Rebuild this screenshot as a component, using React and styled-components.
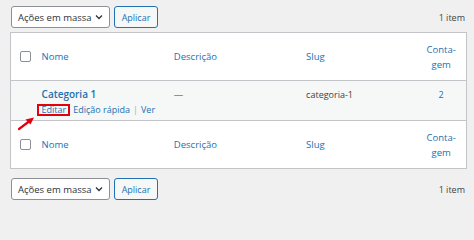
import React from 'react';
import styled, { createGlobalStyle } from 'styled-components';

const GlobalStyle = createGlobalStyle`
  html, body {
    margin: 0;
    padding: 0;
    background: #f0f0f1;
  }
  body {
    font-family: "Open Sans", "Noto Sans", sans-serif;
    font-size: 10px;
    color: #3c434a;
  }
`;

const Page = styled.div`
  padding: 6px 7px 0 10px;
  width: 457px;
  white-space: nowrap;
`;

const Nav = styled.div`
  display: flex;
  align-items: center;
  height: 22px;
  margin: ${({ $bottom }) => ($bottom ? '9px 0 0' : '0 0 4px')};
`;

const Select = styled.div`
  display: flex;
  align-items: center;
  justify-content: space-between;
  box-sizing: border-box;
  width: 99px;
  height: 22px;
  padding: 0 6px 0 6px;
  background: #fff;
  border: 1px solid #8c8f94;
  border-radius: 3px;
  color: #2c3338;
  font-size: 9.5px;
  margin-left: 1px;
`;

const Button = styled.div`
  display: flex;
  align-items: center;
  justify-content: center;
  box-sizing: border-box;
  width: 44px;
  height: 22px;
  margin-left: 4px;
  background: #f6f7f7;
  border: 1px solid #2271b1;
  border-radius: 3px;
  color: #2271b1;
  font-size: 9px;
`;

const Count = styled.div`
  margin-left: auto;
  color: #3c434a;
  font-size: 9px;
  padding-right: 2px;
`;

const Table = styled.table`
  width: 457px;
  table-layout: fixed;
  border-collapse: collapse;
  border: 1px solid #c3c4c7;
  background: #fff;
  font-size: 9.5px;
`;

const HeadCell = styled.th`
  height: 47px;
  padding: 0 6px;
  text-align: ${({ $center }) => ($center ? 'center' : 'left')};
  font-weight: 400;
  color: #2271b1;
  line-height: 15px;
  vertical-align: middle;
  white-space: normal;
  border-${({ $top }) => ($top ? 'bottom' : 'top')}: 1px solid #c3c4c7;
`;

const Row = styled.tr`
  background: #f6f7f7;
`;

const Cell = styled.td`
  height: 40px;
  padding: 6px 6px 0;
  vertical-align: top;
  text-align: ${({ $center }) => ($center ? 'center' : 'left')};
  line-height: 15px;
  font-size: ${({ $small }) => ($small ? '9px' : '9.5px')};
  color: ${({ $link }) => ($link ? '#2271b1' : '#3c434a')};
  box-sizing: border-box;
`;

const CheckCell = styled.td`
  padding: 0 0 0 9px;
  vertical-align: middle;
  border-${({ $top }) => ($top ? 'bottom' : 'top')}: 1px solid #c3c4c7;
`;

const Check = styled.span`
  display: block;
  width: 9px;
  height: 9px;
  border: 1px solid #8c8f94;
  border-radius: 2px;
  background: #fff;
`;

const Title = styled.div`
  font-weight: 600;
  font-size: 10px;
  color: #2271b1;
`;

const Actions = styled.div`
  position: relative;
  display: flex;
  align-items: center;
  font-size: 9px;
`;

const Action = styled.span`
  color: #2271b1;
  box-sizing: border-box;
  ${({ $boxed }) =>
    $boxed &&
    `
    display: flex;
    align-items: center;
    border: 2px solid #e3000f;
    margin-left: -5px;
    margin-right: 3px;
    padding: 0 2px 0 3px;
    height: 12px;
  `}
`;

const Sep = styled.span`
  color: #a7aaad;
  margin: 0 3px;
`;

const Arrow = styled.svg`
  position: absolute;
  left: -25px;
  top: 13px;
`;

const Chevron = () => (
  <svg width="8" height="6" viewBox="0 0 8 6">
    <path d="M1 1.5 L4 4.5 L7 1.5" fill="none" stroke="#2c3338" strokeWidth="1.3" />
  </svg>
);

const TopNav = ({ bottom }) => (
  <Nav $bottom={bottom}>
    <Select>
      Ações em massa
      <Chevron />
    </Select>
    <Button>Aplicar</Button>
    <Count>1 item</Count>
  </Nav>
);

const HeaderRow = ({ top }) => (
  <tr>
    <CheckCell $top={top}>
      <Check />
    </CheckCell>
    <HeadCell $top={top}>Nome</HeadCell>
    <HeadCell $top={top}>Descrição</HeadCell>
    <HeadCell $top={top}>Slug</HeadCell>
    <HeadCell $top={top} $center>Conta&shy;gem</HeadCell>
  </tr>
);

export default function App() {
  return (
    <Page>
      <GlobalStyle />
      <TopNav />
      <Table>
        <colgroup>
          <col style={{ width: 25 }} />
          <col style={{ width: 132 }} />
          <col style={{ width: 132 }} />
          <col style={{ width: 116 }} />
          <col style={{ width: 50 }} />
        </colgroup>
        <thead>
          <HeaderRow top />
        </thead>
        <tbody>
          <Row>
            <td />
            <Cell>
              <Title>Categoria 1</Title>
              <Actions>
                <Action $boxed>Editar</Action>
                <Action>Edição rápida</Action>
                <Sep>|</Sep>
                <Action>Ver</Action>
                <Arrow width="20" height="16" viewBox="0 0 20 16">
                  <path d="M2 14 L12 6.5" stroke="#e3000f" strokeWidth="2.2" strokeLinecap="round" />
                  <path d="M17 2.5 L8.5 4.5 L13.5 9.5 Z" fill="#e3000f" />
                </Arrow>
              </Actions>
            </Cell>
            <Cell>—</Cell>
            <Cell $small>categoria-1</Cell>
            <Cell $center $link $small>2</Cell>
          </Row>
        </tbody>
        <tfoot>
          <HeaderRow />
        </tfoot>
      </Table>
      <TopNav bottom />
    </Page>
  );
}
